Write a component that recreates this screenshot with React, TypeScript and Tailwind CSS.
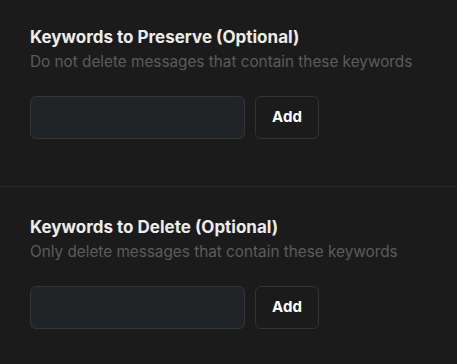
import { useState } from "react";

interface KeywordSectionProps {
    title: string;
    hint: string;
    className?: string;
}

function KeywordSection({ title, hint, className = "" }: KeywordSectionProps) {
    const [value, setValue] = useState("");

    return (
        <section className={`px-[30px] ${className}`}>
            <h3 className="text-[17px] leading-6 font-bold text-[#ececec]">{title}</h3>
            <p className="mt-[3px] text-[15.3px] leading-5 text-[#5c5c5d]">{hint}</p>
            <div className="mt-[24px] flex gap-[10px]">
                <input
                    type="text"
                    value={value}
                    onChange={(e) => setValue(e.target.value)}
                    className="h-[43px] w-[215px] rounded-md border border-[#343538] bg-[#222326] px-3 text-sm text-gray-200 focus:outline-none"
                />
                <button
                    type="button"
                    className="h-[43px] w-[64px] rounded-md border border-[#333335] bg-[#1b1b1c] text-[15px] font-bold text-white"
                >
                    Add
                </button>
            </div>
        </section>
    );
}

export default function App() {
    return (
        <div className="min-h-[364px] w-[457px] bg-[#1b1b1c] font-['Inter',sans-serif]">
            <KeywordSection
                title="Keywords to Preserve (Optional)"
                hint="Do not delete messages that contain these keywords"
                className="pt-[25px] pb-[47px] border-b border-[#2a2a2b]"
            />
            <KeywordSection
                title="Keywords to Delete (Optional)"
                hint="Only delete messages that contain these keywords"
                className="pt-[28px] pb-[34px]"
            />
        </div>
    );
}
